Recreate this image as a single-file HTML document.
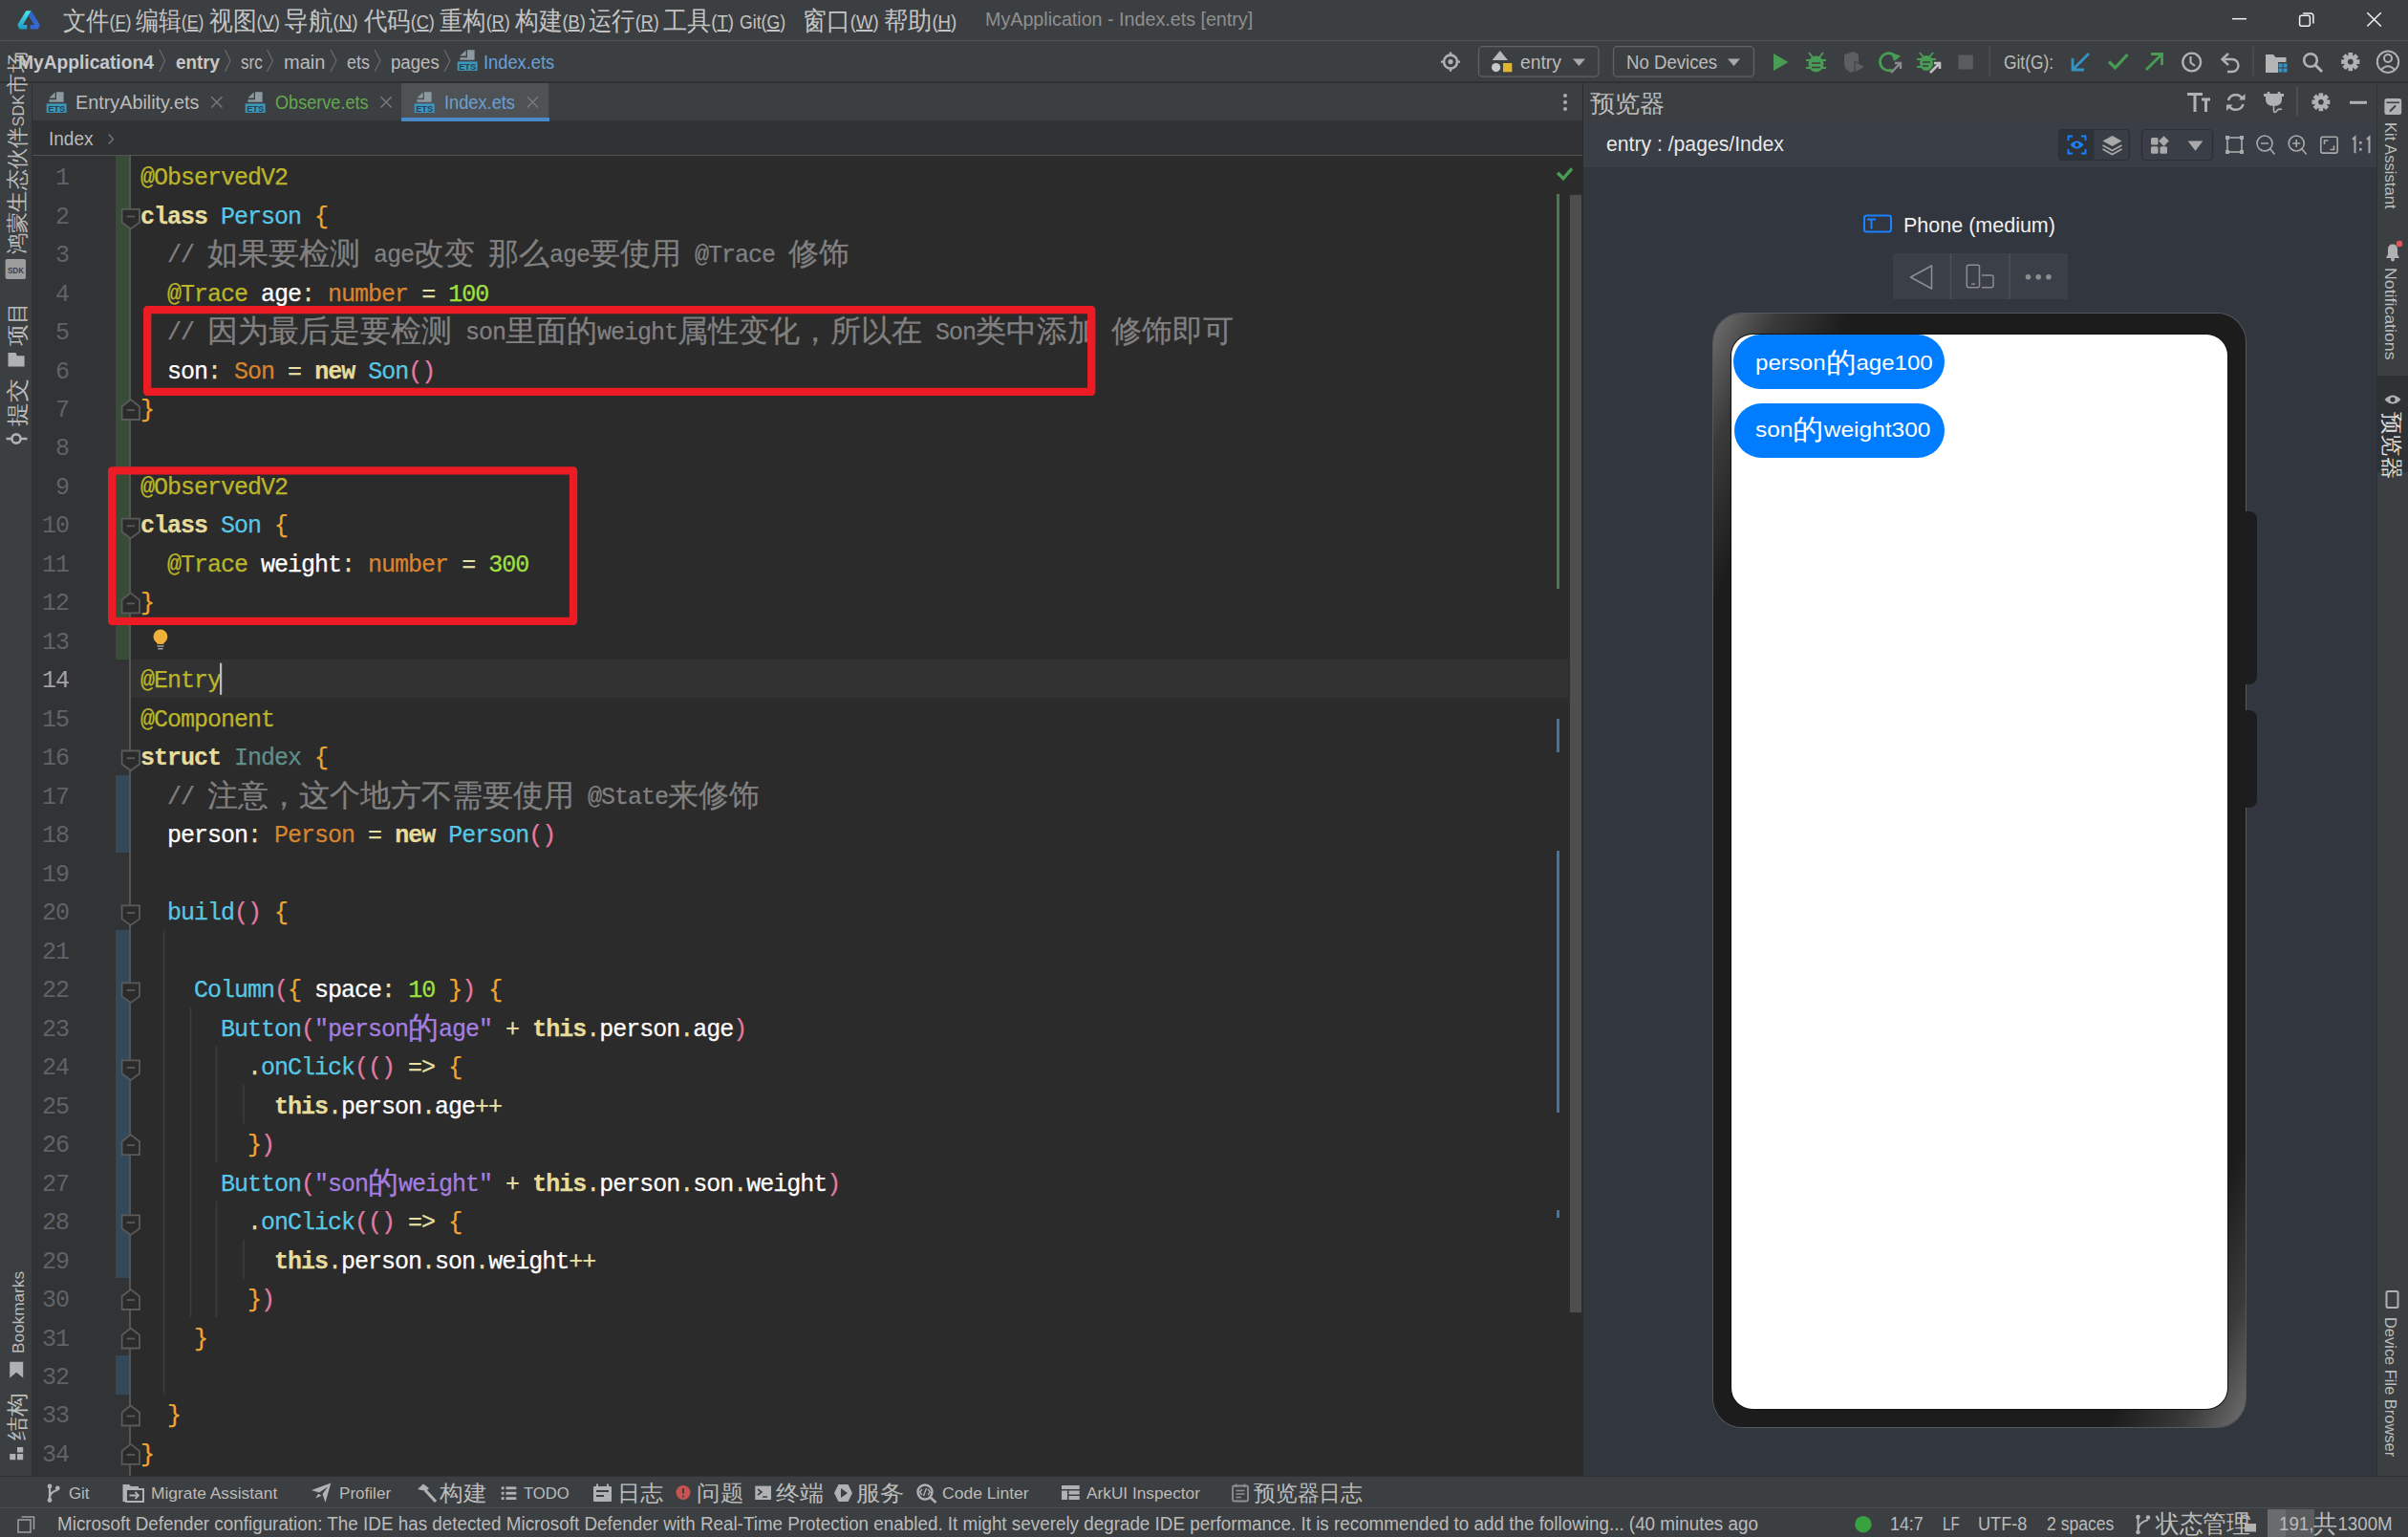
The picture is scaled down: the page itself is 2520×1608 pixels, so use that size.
<!DOCTYPE html>
<html><head><meta charset="utf-8"><title>DevEco</title><style>
*{margin:0;padding:0;box-sizing:border-box}
html,body{width:2520px;height:1608px;overflow:hidden;background:#3c3f41}
body{position:relative;font-family:"Liberation Sans",sans-serif;color:#bbbbbb}
.a{position:absolute}
.t{position:absolute;white-space:nowrap;line-height:1}
.cj{font-size:1.333em;line-height:0;position:relative;top:0.06em}
svg{position:absolute;overflow:visible}
/* code */
.code{position:absolute;left:0;top:0;width:2520px;height:1608px;pointer-events:none}
.ln{-webkit-text-stroke:0.25px currentColor;position:absolute;left:147px;height:40.48px;line-height:40.48px;font-family:"Liberation Mono",monospace;font-size:25px;letter-spacing:-1px;white-space:pre;color:#a9b7c6}
.num{position:absolute;left:34px;width:38px;text-align:right;height:40.48px;line-height:40.48px;font-family:"Liberation Mono",monospace;font-size:25px;letter-spacing:-1px;color:#606366}
.k{letter-spacing:0;font-family:"Liberation Sans";font-size:32px;line-height:0;position:relative;top:2px}
.an{color:#bbb529}
.kw{color:#e6dd9c;font-weight:bold}
.cl{color:#56c8e6}
.br{color:#f0a732}
.pa{color:#e27ba5}
.cm{color:#808080}
.id{color:#ffffff}
.ty{color:#d9842e}
.nu{color:#a0e040}
.op{color:#e8e0a4}
.st{color:#a57fe0}
.ix{color:#5f8f8a}
</style></head><body>
<div class="a" style="left:0.0px;top:0.0px;width:2520.0px;height:42.0px;background:#3c3f41;"></div>
<div class="a" style="left:0.0px;top:42.0px;width:2520.0px;height:1.0px;background:#4e5153;"></div>
<div class="a" style="left:0.0px;top:43.0px;width:2520.0px;height:42.0px;background:#3c3f41;"></div>
<div class="a" style="left:0.0px;top:85.0px;width:2520.0px;height:2.0px;background:#2e3032;"></div>
<div class="a" style="left:0.0px;top:87.0px;width:33.0px;height:1457.0px;background:#3c3f41;"></div>
<div class="a" style="left:33.0px;top:87.0px;width:1.0px;height:1457.0px;background:#2f3133;"></div>
<div class="a" style="left:34.0px;top:87.0px;width:1622.0px;height:39.0px;background:#3c3f41;"></div>
<div class="a" style="left:34.0px;top:126.0px;width:1622.0px;height:36.0px;background:#313233;"></div>
<div class="a" style="left:34.0px;top:162.0px;width:1622.0px;height:1.0px;background:#525354;"></div>
<div class="a" style="left:34.0px;top:163.0px;width:101.0px;height:1381.0px;background:#313335;"></div>
<div class="a" style="left:135.0px;top:163.0px;width:2.0px;height:1381.0px;background:#555555;"></div>
<div class="a" style="left:137.0px;top:163.0px;width:1519.0px;height:1381.0px;background:#2b2b2b;"></div>
<div class="a" style="left:137.0px;top:689.7px;width:1519.0px;height:40.5px;background:#323232;"></div>
<div class="a" style="left:121.0px;top:163.0px;width:14.0px;height:526.7px;background:#384c38;"></div>
<div class="a" style="left:121.0px;top:811.2px;width:14.0px;height:81.0px;background:#33495a;"></div>
<div class="a" style="left:121.0px;top:973.1px;width:14.0px;height:364.3px;background:#33495a;"></div>
<div class="a" style="left:121.0px;top:1418.4px;width:14.0px;height:40.5px;background:#33495a;"></div>
<div class="a" style="left:1656.0px;top:87.0px;width:1.0px;height:1457.0px;background:#2b2b2b;"></div>
<div class="a" style="left:1641.0px;top:202.0px;width:15.0px;height:1172.0px;background:#2e2e2e;"></div>
<div class="a" style="left:1643.0px;top:204.0px;width:12.0px;height:1168.6px;background:#4e4e4e;"></div>
<div class="a" style="left:1629.0px;top:203.0px;width:3.0px;height:412.5px;background:#4b7a52;"></div>
<div class="a" style="left:1629.0px;top:752.0px;width:3.0px;height:35.0px;background:#4473a0;"></div>
<div class="a" style="left:1629.0px;top:890.0px;width:3.0px;height:274.4px;background:#4473a0;"></div>
<div class="a" style="left:1629.0px;top:1266.0px;width:3.0px;height:8.0px;background:#4473a0;"></div>
<div class="a" style="left:1657.0px;top:87.0px;width:830.0px;height:40.0px;background:#3c3f41;"></div>
<div class="a" style="left:1657.0px;top:127.0px;width:830.0px;height:48.0px;background:#3a3e46;"></div>
<div class="a" style="left:1657.0px;top:175.0px;width:830.0px;height:1369.0px;background:#32363e;"></div>
<div class="a" style="left:2487.0px;top:87.0px;width:33.0px;height:1457.0px;background:#3c3f41;"></div>
<div class="a" style="left:2487.0px;top:87.0px;width:1.0px;height:1457.0px;background:#2f3133;"></div>
<div class="a" style="left:0.0px;top:1544.0px;width:2520.0px;height:34.0px;background:#3c3f41;"></div>
<div class="a" style="left:0.0px;top:1544.0px;width:2520.0px;height:1.0px;background:#323232;"></div>
<div class="a" style="left:0.0px;top:1577.0px;width:2520.0px;height:1.0px;background:#4a4d4f;"></div>
<div class="a" style="left:0.0px;top:1578.0px;width:2520.0px;height:30.0px;background:#3c3f41;"></div>
<div class="ln" style="top:167.10px"><span class="an">@ObservedV2</span></div>
<div class="num" style="top:167.10px;color:#606366">1</div>
<div class="ln" style="top:207.58px"><span class="kw">class</span> <span class="cl">Person</span> <span class="br">{</span></div>
<div class="num" style="top:207.58px;color:#606366">2</div>
<div class="ln" style="top:248.06px"><span class="cm">  // <span class="k">如果要检测</span> age<span class="k">改变</span> <span class="k">那么</span>age<span class="k">要使用</span> @Trace <span class="k">修饰</span></span></div>
<div class="num" style="top:248.06px;color:#606366">3</div>
<div class="ln" style="top:288.54px">  <span class="an">@Trace</span> <span class="id">age</span><span class="op">:</span> <span class="ty">number</span> <span class="op">=</span> <span class="nu">100</span></div>
<div class="num" style="top:288.54px;color:#606366">4</div>
<div class="ln" style="top:329.02px"><span class="cm">  // <span class="k">因为最后是要检测</span> son<span class="k">里面的</span>weight<span class="k">属性变化，所以在</span> Son<span class="k">类中添加</span> <span class="k">修饰即可</span></span></div>
<div class="num" style="top:329.02px;color:#606366">5</div>
<div class="ln" style="top:369.50px">  <span class="id">son</span><span class="op">:</span> <span class="ty">Son</span> <span class="op">=</span> <span class="kw">new</span> <span class="cl">Son</span><span class="pa">()</span></div>
<div class="num" style="top:369.50px;color:#606366">6</div>
<div class="ln" style="top:409.98px"><span class="br">}</span></div>
<div class="num" style="top:409.98px;color:#606366">7</div>
<div class="ln" style="top:450.46px"></div>
<div class="num" style="top:450.46px;color:#606366">8</div>
<div class="ln" style="top:490.94px"><span class="an">@ObservedV2</span></div>
<div class="num" style="top:490.94px;color:#606366">9</div>
<div class="ln" style="top:531.42px"><span class="kw">class</span> <span class="cl">Son</span> <span class="br">{</span></div>
<div class="num" style="top:531.42px;color:#606366">10</div>
<div class="ln" style="top:571.90px">  <span class="an">@Trace</span> <span class="id">weight</span><span class="op">:</span> <span class="ty">number</span> <span class="op">=</span> <span class="nu">300</span></div>
<div class="num" style="top:571.90px;color:#606366">11</div>
<div class="ln" style="top:612.38px"><span class="br">}</span></div>
<div class="num" style="top:612.38px;color:#606366">12</div>
<div class="ln" style="top:652.86px"></div>
<div class="num" style="top:652.86px;color:#606366">13</div>
<div class="ln" style="top:693.34px"><span class="an">@Entry</span></div>
<div class="num" style="top:693.34px;color:#a4a3a3">14</div>
<div class="ln" style="top:733.82px"><span class="an">@Component</span></div>
<div class="num" style="top:733.82px;color:#606366">15</div>
<div class="ln" style="top:774.30px"><span class="kw">struct</span> <span class="ix">Index</span> <span class="br">{</span></div>
<div class="num" style="top:774.30px;color:#606366">16</div>
<div class="ln" style="top:814.78px"><span class="cm">  // <span class="k">注意，这个地方不需要使用</span> @State<span class="k">来修饰</span></span></div>
<div class="num" style="top:814.78px;color:#606366">17</div>
<div class="ln" style="top:855.26px">  <span class="id">person</span><span class="op">:</span> <span class="ty">Person</span> <span class="op">=</span> <span class="kw">new</span> <span class="cl">Person</span><span class="pa">()</span></div>
<div class="num" style="top:855.26px;color:#606366">18</div>
<div class="ln" style="top:895.74px"></div>
<div class="num" style="top:895.74px;color:#606366">19</div>
<div class="ln" style="top:936.22px">  <span class="cl">build</span><span class="pa">()</span> <span class="br">{</span></div>
<div class="num" style="top:936.22px;color:#606366">20</div>
<div class="ln" style="top:976.70px"></div>
<div class="num" style="top:976.70px;color:#606366">21</div>
<div class="ln" style="top:1017.18px">    <span class="cl">Column</span><span class="pa">(</span><span class="br">{</span> <span class="id">space</span><span class="op">:</span> <span class="nu">10</span> <span class="br">}</span><span class="pa">)</span> <span class="br">{</span></div>
<div class="num" style="top:1017.18px;color:#606366">22</div>
<div class="ln" style="top:1057.66px">      <span class="cl">Button</span><span class="pa">(</span><span class="st">&quot;person<span class="k">的</span>age&quot;</span> <span class="op">+</span> <span class="kw">this</span><span class="op">.</span><span class="id">person</span><span class="op">.</span><span class="id">age</span><span class="pa">)</span></div>
<div class="num" style="top:1057.66px;color:#606366">23</div>
<div class="ln" style="top:1098.14px">        <span class="op">.</span><span class="cl">onClick</span><span class="pa">(()</span> <span class="op">=&gt;</span> <span class="br">{</span></div>
<div class="num" style="top:1098.14px;color:#606366">24</div>
<div class="ln" style="top:1138.62px">          <span class="kw">this</span><span class="op">.</span><span class="id">person</span><span class="op">.</span><span class="id">age</span><span class="op">++</span></div>
<div class="num" style="top:1138.62px;color:#606366">25</div>
<div class="ln" style="top:1179.10px">        <span class="br">}</span><span class="pa">)</span></div>
<div class="num" style="top:1179.10px;color:#606366">26</div>
<div class="ln" style="top:1219.58px">      <span class="cl">Button</span><span class="pa">(</span><span class="st">&quot;son<span class="k">的</span>weight&quot;</span> <span class="op">+</span> <span class="kw">this</span><span class="op">.</span><span class="id">person</span><span class="op">.</span><span class="id">son</span><span class="op">.</span><span class="id">weight</span><span class="pa">)</span></div>
<div class="num" style="top:1219.58px;color:#606366">27</div>
<div class="ln" style="top:1260.06px">        <span class="op">.</span><span class="cl">onClick</span><span class="pa">(()</span> <span class="op">=&gt;</span> <span class="br">{</span></div>
<div class="num" style="top:1260.06px;color:#606366">28</div>
<div class="ln" style="top:1300.54px">          <span class="kw">this</span><span class="op">.</span><span class="id">person</span><span class="op">.</span><span class="id">son</span><span class="op">.</span><span class="id">weight</span><span class="op">++</span></div>
<div class="num" style="top:1300.54px;color:#606366">29</div>
<div class="ln" style="top:1341.02px">        <span class="br">}</span><span class="pa">)</span></div>
<div class="num" style="top:1341.02px;color:#606366">30</div>
<div class="ln" style="top:1381.50px">    <span class="br">}</span></div>
<div class="num" style="top:1381.50px;color:#606366">31</div>
<div class="ln" style="top:1421.98px"></div>
<div class="num" style="top:1421.98px;color:#606366">32</div>
<div class="ln" style="top:1462.46px">  <span class="br">}</span></div>
<div class="num" style="top:1462.46px;color:#606366">33</div>
<div class="ln" style="top:1502.94px"><span class="br">}</span></div>
<div class="num" style="top:1502.94px;color:#606366">34</div>
<div class="a" style="left:1792.5px;top:328.3px;width:557.5px;height:1164.6px;border-radius:30px;background:linear-gradient(to bottom right,#707070 0%,#3a3a3a 6%,#1c1c1c 13%,#1c1c1c 87%,#3a3a3a 94%,#707070 100%);box-shadow:0 0 0 1px #55585c"></div>
<div class="a" style="left:2350px;top:534.7px;width:12px;height:181.7px;border-radius:0 8px 8px 0;background:#1d1d1f"></div>
<div class="a" style="left:2350px;top:743px;width:12px;height:102.4px;border-radius:0 8px 8px 0;background:#1d1d1f"></div>
<div class="a" style="left:1812.4px;top:349.6px;width:518.6px;height:1124px;border-radius:22px;background:#ffffff;box-shadow:0 0 0 1px #111"></div>
<div class="a" style="left:1813.6px;top:350px;width:221.9px;height:57.3px;border-radius:29px;background:#007dff"></div>
<div class="a" style="left:1814.7px;top:421.9px;width:220px;height:57.4px;border-radius:29px;background:#007dff"></div>
<svg style="left:0;top:0" width="2520" height="1608" viewBox="0 0 2520 1608">
<defs><linearGradient id="lg1" x1="0" y1="0" x2="0" y2="1"><stop offset="0" stop-color="#4fe3ea"/><stop offset="1" stop-color="#1b9ccf"/></linearGradient><linearGradient id="lg2" x1="0" y1="0" x2="1" y2="1"><stop offset="0" stop-color="#2466c8"/><stop offset="1" stop-color="#3f66d6"/></linearGradient></defs>
<path d="M27.3 11.3 H32.75 L24 25.9 H28.3 V30.4 H20.4 L18.3 26 Z" fill="url(#lg1)"/>
<path d="M32.75 11.3 L41.8 25.9 L39.7 30.4 H31.7 V25.9 H36 L30 16.9 Z" fill="url(#lg2)"/>
<path d="M2336 19.7 H2351" stroke="#f2f2f2" stroke-width="1.5"/>
<rect x="2406.6" y="16.3" width="10.8" height="11" rx="2" fill="none" stroke="#f2f2f2" stroke-width="1.5"/>
<path d="M2410.2 13.9 H2418.3 a2.6 2.6 0 0 1 2.6 2.6 V24.5" fill="none" stroke="#f2f2f2" stroke-width="1.5"/>
<path d="M2477.3 13.2 L2491.8 27.5 M2491.8 13.2 L2477.3 27.5" stroke="#f2f2f2" stroke-width="1.5"/>
<polyline points="167.0,52.0 172.5,63.5 167.0,75.0" stroke="#6b6b6b" stroke-width="1.2" fill="none"/>
<polyline points="235.5,52.0 241.0,63.5 235.5,75.0" stroke="#6b6b6b" stroke-width="1.2" fill="none"/>
<polyline points="279.5,52.0 285.5,63.5 279.5,75.0" stroke="#6b6b6b" stroke-width="1.2" fill="none"/>
<polyline points="346.0,52.0 352.0,63.5 346.0,75.0" stroke="#6b6b6b" stroke-width="1.2" fill="none"/>
<polyline points="392.0,52.0 398.0,63.5 392.0,75.0" stroke="#6b6b6b" stroke-width="1.2" fill="none"/>
<polyline points="465.0,52.0 471.0,63.5 465.0,75.0" stroke="#6b6b6b" stroke-width="1.2" fill="none"/>
<path d="M481.4 58.5 L487.7 52.6 V58.5 Z" fill="#8d99a1"/><path d="M489.0 52.3 H496.6 V62.8 H481.4 V60.2 H489.0 Z" fill="#8d99a1"/><rect x="478.7" y="64.4" width="20.9" height="9.5" fill="#3d97bf"/><text x="480.2" y="73.0" font-family="Liberation Sans" font-size="9.6" font-weight="bold" fill="#27414f" textLength="18" lengthAdjust="spacingAndGlyphs">ETS</text>
<circle cx="1518" cy="64.6" r="7" fill="none" stroke="#afb1b3" stroke-width="2.6"/><circle cx="1518" cy="64.6" r="2.6" fill="#afb1b3"/>
<path d="M1518 54.5 V57.8 M1518 71.4 V74.7 M1507.9 64.6 H1511.2 M1524.8 64.6 H1528.1" stroke="#afb1b3" stroke-width="2.4"/>
<rect x="1547.5" y="48.7" width="125.5" height="31.5" rx="4" fill="none" stroke="#5f6264" stroke-width="1.3"/>
<path d="M1569.8 53 L1578 63 H1561.6 Z" fill="#b8b8b8"/><circle cx="1565.6" cy="70.6" r="4.6" fill="#c8c8c8"/><rect x="1573" y="66" width="9.3" height="9.3" fill="#e3b52e"/>
<path d="M1646 61.5 H1659 L1652.5 69 Z" fill="#a9a9a9"/>
<rect x="1688.5" y="48.7" width="147" height="31.5" rx="4" fill="none" stroke="#5f6264" stroke-width="1.3"/>
<path d="M1808 61.5 H1821 L1814.5 69 Z" fill="#a9a9a9"/>
<path d="M1856 56 L1871.5 65 L1856 74 Z" fill="#499c54"/>
<g fill="#499c54"><ellipse cx="1900.5" cy="67" rx="8" ry="8.5"/><path d="M1893 55 l4 5 M1908 55 l-4 5" stroke="#499c54" stroke-width="2"/><path d="M1890 63 h21 M1890 71 h21" stroke="#499c54" stroke-width="2"/></g><path d="M1896 66 h9 M1896 70.5 h9" stroke="#3c3f41" stroke-width="1.6"/>
<path d="M1930 57 L1940 54 L1945 57 V66 Q1945 73 1937 76 Q1930 73 1930 66 Z" fill="#5c5e60"/><path d="M1941 64 L1952 70 L1941 76 Z" fill="#5c5e60" stroke="#3c3f41" stroke-width="1"/>
<path d="M1985 62 A9 9 0 1 0 1980 73" fill="none" stroke="#499c54" stroke-width="2.8"/><path d="M1979 55 L1989 58.5 L1982 64 Z" fill="#499c54"/>
<path d="M1979 76 L1989 66 M1983 66 H1989 V72" fill="none" stroke="#8c8c8c" stroke-width="2.4"/>
<g><ellipse cx="2016" cy="66" rx="7" ry="8" fill="#499c54"/><path d="M2009 55 l3.5 4.5 M2023 55 l-3.5 4.5 M2006 62 h20 M2006 70 h14" stroke="#499c54" stroke-width="2"/><path d="M2012 65 h8 M2012 69 h6" stroke="#3c3f41" stroke-width="1.5"/><path d="M2020 76 L2030 66 M2024 66 H2030 V72" fill="none" stroke="#c0c0c0" stroke-width="2.6"/></g>
<rect x="2049.5" y="57.5" width="15.3" height="15" fill="#5a5c5e"/>
<path d="M2082 49 V79 M2358 49 V79" stroke="#505355" stroke-width="1.3"/>
<path d="M2186 56 L2170 72 M2169 61 V73 H2181" fill="none" stroke="#3592c4" stroke-width="2.8"/>
<path d="M2207 64.5 L2213.5 71 L2226.5 57" fill="none" stroke="#499c54" stroke-width="3.2"/>
<path d="M2246 73 L2262 57 M2251 56.5 H2262.5 V68" fill="none" stroke="#499c54" stroke-width="2.8"/>
<circle cx="2293.7" cy="65" r="9.4" fill="none" stroke="#afb1b3" stroke-width="2.4"/><path d="M2292.5 59 V65.5 L2297 69" fill="none" stroke="#afb1b3" stroke-width="2.2"/>
<path d="M2327 62 H2336 A6.5 6.5 0 0 1 2336 75 H2331" fill="none" stroke="#afb1b3" stroke-width="2.4"/><path d="M2332 56 L2325.5 62 L2332 68" fill="none" stroke="#afb1b3" stroke-width="2.4"/>
<path d="M2371 57 H2379 L2381.5 60 H2392.5 V76 H2371 Z" fill="#b5b5b5"/><rect x="2384" y="65" width="10" height="12" fill="#3c3f41"/><rect x="2384.5" y="66.5" width="4" height="4" fill="#3592c4"/><rect x="2389.5" y="66.5" width="4" height="4" fill="#3592c4"/><rect x="2384.5" y="71.5" width="4" height="4" fill="#3592c4"/><rect x="2389.5" y="71.5" width="4" height="4" fill="#3592c4"/>
<circle cx="2418" cy="63" r="6.8" fill="none" stroke="#afb1b3" stroke-width="2.6"/><path d="M2423 68 L2430 75" stroke="#afb1b3" stroke-width="3"/>
<g transform="translate(2459.8 64.6)" fill="#afb1b3"><rect x="-2.3" y="-9.6" width="4.6" height="5.8" transform="rotate(0)"/><rect x="-2.3" y="-9.6" width="4.6" height="5.8" transform="rotate(45)"/><rect x="-2.3" y="-9.6" width="4.6" height="5.8" transform="rotate(90)"/><rect x="-2.3" y="-9.6" width="4.6" height="5.8" transform="rotate(135)"/><rect x="-2.3" y="-9.6" width="4.6" height="5.8" transform="rotate(180)"/><rect x="-2.3" y="-9.6" width="4.6" height="5.8" transform="rotate(225)"/><rect x="-2.3" y="-9.6" width="4.6" height="5.8" transform="rotate(270)"/><rect x="-2.3" y="-9.6" width="4.6" height="5.8" transform="rotate(315)"/><circle r="6.9"/><circle r="2.9" fill="#3c3f41"/></g>
<circle cx="2499" cy="64.7" r="11.2" fill="none" stroke="#afb1b3" stroke-width="2"/><circle cx="2499" cy="61" r="4" fill="none" stroke="#afb1b3" stroke-width="2"/><path d="M2491.5 73.5 Q2499 65 2506.5 73.5" fill="none" stroke="#afb1b3" stroke-width="2"/>
<rect x="420.0" y="87.0" width="154.0" height="36.0" fill="#4e5254"/>
<rect x="420.0" y="123.0" width="155.0" height="4.0" fill="#4a88c7"/>
<path d="M51.4 102.5 L57.7 96.6 V102.5 Z" fill="#8d99a1"/><path d="M59.0 96.3 H66.6 V106.8 H51.4 V104.2 H59.0 Z" fill="#8d99a1"/><rect x="48.7" y="108.4" width="20.9" height="9.5" fill="#3d97bf"/><text x="50.2" y="117.0" font-family="Liberation Sans" font-size="9.6" font-weight="bold" fill="#27414f" textLength="18" lengthAdjust="spacingAndGlyphs">ETS</text>
<path d="M259.4 102.5 L265.7 96.6 V102.5 Z" fill="#8d99a1"/><path d="M267.0 96.3 H274.6 V106.8 H259.4 V104.2 H267.0 Z" fill="#8d99a1"/><rect x="256.7" y="108.4" width="20.9" height="9.5" fill="#3d97bf"/><text x="258.2" y="117.0" font-family="Liberation Sans" font-size="9.6" font-weight="bold" fill="#27414f" textLength="18" lengthAdjust="spacingAndGlyphs">ETS</text>
<path d="M436.4 102.5 L442.7 96.6 V102.5 Z" fill="#8d99a1"/><path d="M444.0 96.3 H451.6 V106.8 H436.4 V104.2 H444.0 Z" fill="#8d99a1"/><rect x="433.7" y="108.4" width="20.9" height="9.5" fill="#3d97bf"/><text x="435.2" y="117.0" font-family="Liberation Sans" font-size="9.6" font-weight="bold" fill="#27414f" textLength="18" lengthAdjust="spacingAndGlyphs">ETS</text>
<path d="M221.2 101.2 L232.4 112.4 M232.4 101.2 L221.2 112.4" stroke="#7b7b7b" stroke-width="1.4" fill="none"/>
<path d="M398.5 101.2 L409.7 112.4 M409.7 101.2 L398.5 112.4" stroke="#7b7b7b" stroke-width="1.4" fill="none"/>
<path d="M551.8 101.2 L563.0 112.4 M563.0 101.2 L551.8 112.4" stroke="#7b7b7b" stroke-width="1.4" fill="none"/>
<circle cx="1638" cy="100" r="2.1" fill="#a9a9a9"/><circle cx="1638" cy="107" r="2.1" fill="#a9a9a9"/><circle cx="1638" cy="114" r="2.1" fill="#a9a9a9"/>
<polyline points="113.8,140.5 118.5,145.5 113.8,150.5" stroke="#7a7a7a" stroke-width="1.3" fill="none"/>
<path d="M1630 180.8 L1636 186.8 L1645 176.3" fill="none" stroke="#499c54" stroke-width="3.4"/>
<rect x="170.7" y="973.1" width="1.6" height="485.8" fill="#3c3c3c"/>
<rect x="198.7" y="1054.1" width="1.6" height="323.8" fill="#3c3c3c"/>
<rect x="225.7" y="1094.5" width="1.6" height="121.4" fill="#3c3c3c"/>
<rect x="225.7" y="1256.5" width="1.6" height="121.4" fill="#3c3c3c"/>
<rect x="254.2" y="1135.0" width="1.6" height="40.5" fill="#3c3c3c"/>
<rect x="254.2" y="1296.9" width="1.6" height="40.5" fill="#3c3c3c"/>
<path d="M127.6 218.8 H146.0 V232.8 L136.8 239.4 L127.6 232.8 Z" fill="#2b2b2b" stroke="#5a5a5a" stroke-width="1.8"/><path d="M132.6 226.5 H141.0" stroke="#5a5a5a" stroke-width="1.8"/>
<path d="M127.6 542.6 H146.0 V556.6 L136.8 563.2 L127.6 556.6 Z" fill="#2b2b2b" stroke="#5a5a5a" stroke-width="1.8"/><path d="M132.6 550.3 H141.0" stroke="#5a5a5a" stroke-width="1.8"/>
<path d="M127.6 785.5 H146.0 V799.5 L136.8 806.1 L127.6 799.5 Z" fill="#2b2b2b" stroke="#5a5a5a" stroke-width="1.8"/><path d="M132.6 793.2 H141.0" stroke="#5a5a5a" stroke-width="1.8"/>
<path d="M127.6 947.4 H146.0 V961.4 L136.8 968.0 L127.6 961.4 Z" fill="#2b2b2b" stroke="#5a5a5a" stroke-width="1.8"/><path d="M132.6 955.1 H141.0" stroke="#5a5a5a" stroke-width="1.8"/>
<path d="M127.6 1028.4 H146.0 V1042.4 L136.8 1049.0 L127.6 1042.4 Z" fill="#2b2b2b" stroke="#5a5a5a" stroke-width="1.8"/><path d="M132.6 1036.1 H141.0" stroke="#5a5a5a" stroke-width="1.8"/>
<path d="M127.6 1109.3 H146.0 V1123.3 L136.8 1129.9 L127.6 1123.3 Z" fill="#2b2b2b" stroke="#5a5a5a" stroke-width="1.8"/><path d="M132.6 1117.0 H141.0" stroke="#5a5a5a" stroke-width="1.8"/>
<path d="M127.6 1271.3 H146.0 V1285.3 L136.8 1291.9 L127.6 1285.3 Z" fill="#2b2b2b" stroke="#5a5a5a" stroke-width="1.8"/><path d="M132.6 1279.0 H141.0" stroke="#5a5a5a" stroke-width="1.8"/>
<path d="M136.8 418.0 L146.0 425.2 V439.0 H127.6 V425.2 Z" fill="#2b2b2b" stroke="#5a5a5a" stroke-width="1.8"/><path d="M132.6 429.0 H141.0" stroke="#5a5a5a" stroke-width="1.8"/>
<path d="M136.8 620.4 L146.0 627.6 V641.4 H127.6 V627.6 Z" fill="#2b2b2b" stroke="#5a5a5a" stroke-width="1.8"/><path d="M132.6 631.4 H141.0" stroke="#5a5a5a" stroke-width="1.8"/>
<path d="M136.8 1187.1 L146.0 1194.3 V1208.1 H127.6 V1194.3 Z" fill="#2b2b2b" stroke="#5a5a5a" stroke-width="1.8"/><path d="M132.6 1198.1 H141.0" stroke="#5a5a5a" stroke-width="1.8"/>
<path d="M136.8 1349.0 L146.0 1356.2 V1370.0 H127.6 V1356.2 Z" fill="#2b2b2b" stroke="#5a5a5a" stroke-width="1.8"/><path d="M132.6 1360.0 H141.0" stroke="#5a5a5a" stroke-width="1.8"/>
<path d="M136.8 1389.5 L146.0 1396.7 V1410.5 H127.6 V1396.7 Z" fill="#2b2b2b" stroke="#5a5a5a" stroke-width="1.8"/><path d="M132.6 1400.5 H141.0" stroke="#5a5a5a" stroke-width="1.8"/>
<path d="M136.8 1470.5 L146.0 1477.7 V1491.5 H127.6 V1477.7 Z" fill="#2b2b2b" stroke="#5a5a5a" stroke-width="1.8"/><path d="M132.6 1481.5 H141.0" stroke="#5a5a5a" stroke-width="1.8"/>
<path d="M136.8 1510.9 L146.0 1518.1 V1531.9 H127.6 V1518.1 Z" fill="#2b2b2b" stroke="#5a5a5a" stroke-width="1.8"/><path d="M132.6 1521.9 H141.0" stroke="#5a5a5a" stroke-width="1.8"/>
<circle cx="167.9" cy="666.0" r="7.4" fill="#f0b13a"/><path d="M164.3 669.8 h7.2 v4 h-7.2 z" fill="#f0b13a"/><path d="M164.4 675.9 h7 M165.2 678.7 h5.4" stroke="#a0a0a0" stroke-width="1.5"/>
<rect x="230" y="693.7" width="2.2" height="33.2" fill="#bbbbbb"/>
<rect x="154.15" y="324.2" width="988.05" height="85.65" fill="none" stroke="#ed1c24" stroke-width="8.3" stroke-linejoin="round"/>
<rect x="117.15" y="492.4" width="482.9" height="157.5" fill="none" stroke="#ed1c24" stroke-width="8.3" stroke-linejoin="round"/>
<rect x="5.6" y="271" width="21.4" height="21" rx="2" fill="#9d9d9d"/><text x="8" y="285.5" font-family="Liberation Sans" font-weight="bold" font-size="8.5" fill="#3c3f41" textLength="17" lengthAdjust="spacingAndGlyphs">SDK</text>
<path d="M8.5 369 H16.5 L17.8 372.3 H25.6 V383.5 H8.5 Z" fill="#afb1b3"/>
<circle cx="17" cy="459" r="4.6" fill="none" stroke="#afb1b3" stroke-width="2.6"/><path d="M6.5 459 H12.4 M21.6 459 H28.5" stroke="#afb1b3" stroke-width="2.6"/>
<path d="M10.2 1424.8 H24.2 V1441.6 L17.2 1435.7 L10.2 1441.6 Z" fill="#afb1b3"/>
<path d="M10.2 1521 h6.1 v6.2 h-6.1 z M18 1521 h6.2 v6.2 h-6.2 z M18 1513.9 h6.2 v5.5 h-6.2 z" fill="#afb1b3"/>
<rect x="2488.0" y="393.0" width="32.0" height="101.0" fill="#2f3234"/>
<rect x="2495.4" y="103" width="17.8" height="17" rx="2.5" fill="#afb1b3"/><rect x="2497.5" y="106.5" width="13.6" height="1.6" fill="#3c3f41"/><path d="M2501 116.5 L2507 110.5" stroke="#3c3f41" stroke-width="2"/>
<path d="M2497 270 H2511 L2509 266 V261 Q2509 255.5 2504 255.5 Q2499 255.5 2499 261 V266 Z" fill="#afb1b3"/><circle cx="2504" cy="271.5" r="2" fill="#afb1b3"/><circle cx="2511" cy="255" r="3.2" fill="#e05555"/>
<path d="M2495.5 418 Q2504 409 2512.5 418 Q2504 427 2495.5 418 Z" fill="#afb1b3"/><circle cx="2504" cy="418" r="2.6" fill="#2f3234"/>
<rect x="2497.5" y="1351" width="12" height="17" rx="1.5" fill="none" stroke="#afb1b3" stroke-width="2"/>
<path d="M2289 98.5 H2305 M2297 98.5 V117 M2304 104 H2313 M2308.5 104 V117" stroke="#afb1b3" stroke-width="3" fill="none"/>
<path d="M2332 105 A8 8 0 0 1 2347 104 M2347.5 109 A8 8 0 0 1 2332.5 110" fill="none" stroke="#afb1b3" stroke-width="2.6"/><path d="M2343 104.5 H2349.5 V98 Z M2336.5 109.5 H2330 V116 Z" fill="#afb1b3"/>
<path d="M2369 98 H2390 V101 H2388 V104 Q2388 111 2379.5 111 Q2371 111 2371 104 V101 H2369 Z" fill="#afb1b3"/><path d="M2374 96 V99 M2385 96 V99" stroke="#afb1b3" stroke-width="2.6"/><path d="M2379.5 111 V116 Q2379.5 118 2382 117 Q2384 113 2388 114.5" fill="none" stroke="#afb1b3" stroke-width="1.6"/>
<path d="M2404 91 V121" stroke="#55585a" stroke-width="1.3"/>
<g transform="translate(2428.9 106.8)" fill="#afb1b3"><rect x="-2.3" y="-9.4" width="4.6" height="5.6" transform="rotate(0)"/><rect x="-2.3" y="-9.4" width="4.6" height="5.6" transform="rotate(45)"/><rect x="-2.3" y="-9.4" width="4.6" height="5.6" transform="rotate(90)"/><rect x="-2.3" y="-9.4" width="4.6" height="5.6" transform="rotate(135)"/><rect x="-2.3" y="-9.4" width="4.6" height="5.6" transform="rotate(180)"/><rect x="-2.3" y="-9.4" width="4.6" height="5.6" transform="rotate(225)"/><rect x="-2.3" y="-9.4" width="4.6" height="5.6" transform="rotate(270)"/><rect x="-2.3" y="-9.4" width="4.6" height="5.6" transform="rotate(315)"/><circle r="6.8"/><circle r="2.8" fill="#3c3f41"/></g>
<path d="M2459 107.3 H2477" stroke="#afb1b3" stroke-width="3"/>
<rect x="2154.5" y="135.5" width="74" height="32" rx="4" fill="#393d45" stroke="#2c2f35" stroke-width="1.2"/>
<path d="M2158.5 135.5 H2191.5 V167.5 H2158.5 A4 4 0 0 1 2154.5 163.5 V139.5 A4 4 0 0 1 2158.5 135.5 Z" fill="#2e3239"/>
<path d="M2164.5 147 V142.5 H2169 M2178 142.5 H2182.5 V147 M2182.5 156 V160.5 H2178 M2169 160.5 H2164.5 V156" fill="none" stroke="#1a82ff" stroke-width="1.8"/>
<path d="M2166.5 151.5 Q2173.5 143.5 2180.5 151.5 Q2173.5 159.5 2166.5 151.5 Z" fill="#1a82ff"/><circle cx="2173.5" cy="151.5" r="2.2" fill="#2e3239"/>
<path d="M2210.5 142 L2220.5 147.5 L2210.5 153 L2200.5 147.5 Z" fill="#a9a9a9"/><path d="M2200.5 152 L2210.5 157.5 L2220.5 152 M2200.5 156 L2210.5 161.5 L2220.5 156" fill="none" stroke="#a9a9a9" stroke-width="1.6"/>
<rect x="2241.5" y="135.5" width="74" height="32" rx="4" fill="none" stroke="#2c2f35" stroke-width="1.2"/>
<rect x="2251" y="144" width="7.5" height="7.5" rx="1.5" fill="#a9a9a9"/><rect x="2251" y="153.3" width="7.5" height="7.5" rx="1.5" fill="#a9a9a9"/><rect x="2260.5" y="153.3" width="7.5" height="7.5" rx="1.5" fill="#a9a9a9"/><path d="M2264.5 142.3 L2269.8 147.6 L2264.5 152.9 L2259.2 147.6 Z" fill="#a9a9a9"/>
<path d="M2289.6 147.6 H2305.4 L2297.5 157.7 Z" fill="#a9a9a9"/>
<rect x="2331" y="144" width="15" height="15" fill="none" stroke="#a9a9a9" stroke-width="1.6"/><g fill="#a9a9a9"><rect x="2329" y="142" width="4" height="4"/><rect x="2344" y="142" width="4" height="4"/><rect x="2329" y="157" width="4" height="4"/><rect x="2344" y="157" width="4" height="4"/></g>
<circle cx="2370" cy="150" r="8" fill="none" stroke="#a9a9a9" stroke-width="1.6"/><path d="M2366 150 H2374 M2375.5 155.5 L2380.5 161.5" stroke="#a9a9a9" stroke-width="1.6"/>
<circle cx="2403.2" cy="150" r="8" fill="none" stroke="#a9a9a9" stroke-width="1.6"/><path d="M2399.2 150 H2407.2 M2403.2 146 V154 M2408.7 155.5 L2413.7 161.5" stroke="#a9a9a9" stroke-width="1.6"/>
<rect x="2428.8" y="143.2" width="17.4" height="16.9" rx="2" fill="none" stroke="#a9a9a9" stroke-width="1.6"/><path d="M2432.5 151 V147 H2436.5 M2442.5 152.5 V156.5 H2438.5" fill="none" stroke="#a9a9a9" stroke-width="1.6"/>
<path d="M2462 146 L2464.5 143.5 V160.3 M2477 146 L2479.5 143.5 V160.3" fill="none" stroke="#a9a9a9" stroke-width="2"/><rect x="2469" y="148" width="2.6" height="2.6" fill="#a9a9a9"/><rect x="2469" y="155" width="2.6" height="2.6" fill="#a9a9a9"/>
<rect x="1951" y="225.5" width="28" height="17" rx="2.5" fill="none" stroke="#1a82ff" stroke-width="2"/><path d="M1954 229.5 H1963 M1958.5 229.5 V239.5" stroke="#1a82ff" stroke-width="2"/>
<rect x="1981" y="265" width="183" height="48" fill="#3b3f47"/><path d="M2041.5 265 V313 M2103 265 V313" stroke="#4b4f57" stroke-width="1.5"/>
<path d="M2021.5 278 V302 L1999.5 290 Z" fill="none" stroke="#8d8d8d" stroke-width="1.6" stroke-linejoin="round"/>
<rect x="2058.3" y="277.3" width="13.2" height="23.5" rx="2" fill="none" stroke="#8d8d8d" stroke-width="1.5"/><path d="M2063 297.2 H2067" stroke="#8d8d8d" stroke-width="1.5"/><path d="M2074 288 H2084 a2 2 0 0 1 2 2 V298.8 a2 2 0 0 1 -2 2 H2074" fill="none" stroke="#8d8d8d" stroke-width="1.5"/>
<circle cx="2122.5" cy="289.8" r="2.8" fill="#8d8d8d"/><circle cx="2133.2" cy="289.8" r="2.8" fill="#8d8d8d"/><circle cx="2143.9" cy="289.8" r="2.8" fill="#8d8d8d"/>
<g fill="none" stroke="#afb1b3" stroke-width="2.2"><path d="M52 1556 V1569"/><path d="M52 1567 Q52 1561 60 1559"/></g><circle cx="52" cy="1555" r="2.4" fill="#afb1b3"/><circle cx="52" cy="1569.5" r="2.4" fill="#afb1b3"/><circle cx="60.3" cy="1557" r="2.4" fill="#afb1b3"/>
<path d="M128.5 1553 H135 L137 1555 H145 V1558 H132 V1571 H128.5 Z" fill="#afb1b3"/><rect x="132" y="1558" width="18" height="13" fill="none" stroke="#afb1b3" stroke-width="2"/><path d="M135.5 1564.5 H145 M141.5 1561 L145 1564.5 L141.5 1568" fill="none" stroke="#afb1b3" stroke-width="1.8"/>
<path d="M326 1559 L346.3 1551.6 L340.5 1572 L337.5 1563 L343 1555.5 L334 1561.5 Z" fill="#afb1b3"/><path d="M330.3 1567.6 L333 1562.8 L336.5 1564.8 Z" fill="#afb1b3"/>
<path d="M437 1558 L443 1552.5 L449 1557 L446 1560 Z" fill="#afb1b3"/><path d="M445 1559 L456 1571" stroke="#afb1b3" stroke-width="3.2"/>
<g fill="#afb1b3"><rect x="524.7" y="1555.4" width="2.8" height="2.8"/><rect x="524.7" y="1560.8" width="2.8" height="2.8"/><rect x="524.7" y="1566.2" width="2.8" height="2.8"/><rect x="529.5" y="1555.4" width="10.8" height="2.8"/><rect x="529.5" y="1560.8" width="10.8" height="2.8"/><rect x="529.5" y="1566.2" width="10.8" height="2.8"/></g>
<rect x="621" y="1555" width="19" height="16" rx="1" fill="#afb1b3"/><path d="M625 1552.5 V1556 M636 1552.5 V1556" stroke="#afb1b3" stroke-width="2"/><path d="M624 1560 H637 M624 1565 H632" stroke="#3c3f41" stroke-width="2"/>
<circle cx="715" cy="1561.5" r="7.5" fill="#c75450"/><path d="M715 1557 V1562.5" stroke="#3c3f41" stroke-width="2"/><circle cx="715" cy="1565.5" r="1.1" fill="#3c3f41"/>
<rect x="790.3" y="1554.6" width="16.7" height="14.4" fill="#afb1b3"/><path d="M793 1558 L797 1561 L793 1564 M798 1566 H803" fill="none" stroke="#3c3f41" stroke-width="1.6"/>
<path d="M877.5 1553 H887.5 L892 1562 L887.5 1571 H877.5 L873 1562 Z" fill="#afb1b3"/><path d="M880 1557 L887 1562 L880 1567 Z" fill="#3c3f41"/>
<circle cx="968" cy="1561" r="7.5" fill="none" stroke="#afb1b3" stroke-width="2.4"/><path d="M973.5 1566.5 L979.5 1572" stroke="#afb1b3" stroke-width="2.6"/><path d="M965 1558 L962.5 1561 L965 1564 M971 1558 L973.5 1561 L971 1564 M969.5 1557 L966.5 1565" fill="none" stroke="#afb1b3" stroke-width="1.4"/>
<g fill="#afb1b3"><rect x="1111" y="1554" width="18.7" height="4"/><rect x="1111" y="1559.5" width="6" height="9.5"/><rect x="1118.5" y="1559.5" width="11.2" height="4"/><rect x="1118.5" y="1565" width="11.2" height="4"/></g>
<rect x="1290" y="1554.5" width="16" height="16" rx="1.5" fill="none" stroke="#8f8f8f" stroke-width="1.8"/><path d="M1293.5 1552.5 V1556 M1302.5 1552.5 V1556 M1293.5 1559.5 H1302.5 M1293.5 1563 H1302.5 M1293.5 1566.5 H1299" stroke="#8f8f8f" stroke-width="1.6"/>
<rect x="19" y="1590" width="13" height="13" fill="none" stroke="#a0a0a0" stroke-width="1.5"/><path d="M22.5 1587 H35.5 V1600" fill="none" stroke="#a0a0a0" stroke-width="1.5"/>
<circle cx="1949.9" cy="1594.7" r="8.7" fill="#37a23f"/>
<g fill="none" stroke="#afb1b3" stroke-width="2"><path d="M2237.5 1587 V1603"/><path d="M2237.5 1600 Q2238 1593 2248 1590"/></g><circle cx="2237.5" cy="1587" r="2.3" fill="#afb1b3"/><circle cx="2237.5" cy="1603" r="2.3" fill="#afb1b3"/><circle cx="2248" cy="1587.5" r="2.3" fill="#afb1b3"/>
<path d="M2345 1593 V1590 a4.5 4.5 0 0 1 9 0" fill="none" stroke="#afb1b3" stroke-width="2"/><rect x="2349" y="1594" width="12" height="8.5" fill="#afb1b3"/>
</svg>
<div class="t" style="left:65.60px;top:12.67px;font-size:20.00px;color:#c4c4c4;transform:scaleX(0.8994);transform-origin:0 0;"><span class="cj">文件</span>(<u style="text-underline-offset:1px">F</u>)</div>
<div class="t" style="left:141.64px;top:12.67px;font-size:20.00px;color:#c4c4c4;transform:scaleX(0.8855);transform-origin:0 0;"><span class="cj">编辑</span>(<u style="text-underline-offset:1px">E</u>)</div>
<div class="t" style="left:218.56px;top:12.67px;font-size:20.00px;color:#c4c4c4;transform:scaleX(0.9165);transform-origin:0 0;"><span class="cj">视图</span>(<u style="text-underline-offset:1px">V</u>)</div>
<div class="t" style="left:297.47px;top:12.67px;font-size:20.00px;color:#c4c4c4;transform:scaleX(0.9484);transform-origin:0 0;"><span class="cj">导航</span>(<u style="text-underline-offset:1px">N</u>)</div>
<div class="t" style="left:380.59px;top:12.67px;font-size:20.00px;color:#c4c4c4;transform:scaleX(0.9025);transform-origin:0 0;"><span class="cj">代码</span>(<u style="text-underline-offset:1px">C</u>)</div>
<div class="t" style="left:459.59px;top:12.67px;font-size:20.00px;color:#c4c4c4;transform:scaleX(0.9025);transform-origin:0 0;"><span class="cj">重构</span>(<u style="text-underline-offset:1px">R</u>)</div>
<div class="t" style="left:538.56px;top:12.67px;font-size:20.00px;color:#c4c4c4;transform:scaleX(0.9165);transform-origin:0 0;"><span class="cj">构建</span>(<u style="text-underline-offset:1px">B</u>)</div>
<div class="t" style="left:615.59px;top:12.67px;font-size:20.00px;color:#c4c4c4;transform:scaleX(0.9025);transform-origin:0 0;"><span class="cj">运行</span>(<u style="text-underline-offset:1px">R</u>)</div>
<div class="t" style="left:693.52px;top:12.67px;font-size:20.00px;color:#c4c4c4;transform:scaleX(0.9310);transform-origin:0 0;"><span class="cj">工具</span>(<u style="text-underline-offset:1px">T</u>)</div>
<div class="t" style="left:774.00px;top:12.67px;font-size:20.00px;color:#c4c4c4;transform:scaleX(0.8833);transform-origin:0 0;">Git(<u style="text-underline-offset:1px">G</u>)</div>
<div class="t" style="left:839.54px;top:12.67px;font-size:20.00px;color:#c4c4c4;transform:scaleX(0.9236);transform-origin:0 0;"><span class="cj">窗口</span>(<u style="text-underline-offset:1px">W</u>)</div>
<div class="t" style="left:924.51px;top:12.67px;font-size:20.00px;color:#c4c4c4;transform:scaleX(0.9331);transform-origin:0 0;"><span class="cj">帮助</span>(<u style="text-underline-offset:1px">H</u>)</div>
<div class="t" style="left:1031.40px;top:9.97px;font-size:20.00px;color:#8f8f8f;transform:scaleX(0.9845);transform-origin:0 0;">MyApplication - Index.ets [entry]</div>
<div class="t" style="left:19.00px;top:54.57px;font-size:20.00px;color:#c8c8c8;font-weight:bold;transform:scaleX(0.9596);transform-origin:0 0;">MyApplication4</div>
<div class="t" style="left:184.00px;top:54.57px;font-size:20.00px;color:#c8c8c8;font-weight:bold;transform:scaleX(0.9392);transform-origin:0 0;">entry</div>
<div class="t" style="left:252.00px;top:54.57px;font-size:20.00px;color:#bbbbbb;transform:scaleX(0.8519);transform-origin:0 0;">src</div>
<div class="t" style="left:297.00px;top:54.57px;font-size:20.00px;color:#bbbbbb;">main</div>
<div class="t" style="left:362.50px;top:54.57px;font-size:20.00px;color:#bbbbbb;transform:scaleX(0.8926);transform-origin:0 0;">ets</div>
<div class="t" style="left:409.00px;top:54.57px;font-size:20.00px;color:#bbbbbb;transform:scaleX(0.9315);transform-origin:0 0;">pages</div>
<div class="t" style="left:506.40px;top:54.57px;font-size:20.00px;color:#6a9fd4;transform:scaleX(0.9146);transform-origin:0 0;">Index.ets</div>
<div class="t" style="left:1590.60px;top:55.47px;font-size:20.00px;color:#bbbbbb;transform:scaleX(0.9644);transform-origin:0 0;">entry</div>
<div class="t" style="left:1702.00px;top:55.47px;font-size:20.00px;color:#bbbbbb;transform:scaleX(0.9307);transform-origin:0 0;">No Devices</div>
<div class="t" style="left:2096.60px;top:55.47px;font-size:20.00px;color:#bbbbbb;transform:scaleX(0.8671);transform-origin:0 0;">Git(G):</div>
<div class="t" style="left:79.20px;top:97.07px;font-size:20.00px;color:#bbbbbb;transform:scaleX(0.9893);transform-origin:0 0;">EntryAbility.ets</div>
<div class="t" style="left:287.80px;top:97.07px;font-size:20.00px;color:#62a84f;transform:scaleX(0.9055);transform-origin:0 0;">Observe.ets</div>
<div class="t" style="left:464.70px;top:97.07px;font-size:20.00px;color:#6a9fd4;transform:scaleX(0.9110);transform-origin:0 0;">Index.ets</div>
<div class="t" style="left:50.50px;top:134.67px;font-size:20.00px;color:#bbbbbb;transform:scaleX(0.9490);transform-origin:0 0;">Index</div>
<div class="t" style="left:1663.84px;top:99.41px;font-size:19.00px;color:#bbbbbb;transform:scaleX(1.0494);transform-origin:0 0;"><span class="cj">预览器</span></div>
<div class="t" style="left:1681.00px;top:139.75px;font-size:22.50px;color:#e8e8e8;transform:scaleX(0.9409);transform-origin:0 0;">entry : /pages/Index</div>
<div class="t" style="left:1992.00px;top:226.00px;font-size:21.50px;color:#f0f0f0;">Phone (medium)</div>
<div class="t" style="left:72.00px;top:1554.34px;font-size:17.20px;color:#bbbbbb;transform:scaleX(0.9801);transform-origin:0 0;">Git</div>
<div class="t" style="left:158.40px;top:1554.34px;font-size:17.20px;color:#bbbbbb;transform:scaleX(1.0105);transform-origin:0 0;">Migrate Assistant</div>
<div class="t" style="left:354.70px;top:1554.34px;font-size:17.20px;color:#bbbbbb;transform:scaleX(0.9938);transform-origin:0 0;">Profiler</div>
<div class="t" style="left:459.54px;top:1554.34px;font-size:17.20px;color:#bbbbbb;transform:scaleX(1.0743);transform-origin:0 0;"><span class="cj">构建</span></div>
<div class="t" style="left:548.00px;top:1554.34px;font-size:17.20px;color:#bbbbbb;transform:scaleX(0.9680);transform-origin:0 0;">TODO</div>
<div class="t" style="left:645.60px;top:1554.34px;font-size:17.20px;color:#bbbbbb;transform:scaleX(1.0471);transform-origin:0 0;"><span class="cj">日志</span></div>
<div class="t" style="left:729.15px;top:1554.34px;font-size:17.20px;color:#bbbbbb;transform:scaleX(1.0675);transform-origin:0 0;"><span class="cj">问题</span></div>
<div class="t" style="left:812.09px;top:1554.34px;font-size:17.20px;color:#bbbbbb;transform:scaleX(1.0947);transform-origin:0 0;"><span class="cj">终端</span></div>
<div class="t" style="left:896.18px;top:1554.34px;font-size:17.20px;color:#bbbbbb;transform:scaleX(1.0981);transform-origin:0 0;"><span class="cj">服务</span></div>
<div class="t" style="left:986.00px;top:1554.34px;font-size:17.20px;color:#bbbbbb;transform:scaleX(1.0205);transform-origin:0 0;">Code Linter</div>
<div class="t" style="left:1137.00px;top:1554.34px;font-size:17.20px;color:#bbbbbb;transform:scaleX(1.0040);transform-origin:0 0;">ArkUI Inspector</div>
<div class="t" style="left:1311.73px;top:1554.34px;font-size:17.20px;color:#bbbbbb;transform:scaleX(0.9911);transform-origin:0 0;"><span class="cj">预览器日志</span></div>
<div class="a" style="left:0;top:1578px;width:1893px;height:30px;overflow:hidden"><div class="t" style="left:59.60px;top:6.99px;font-size:19.50px;color:#bbbbbb;transform:scaleX(0.9660);transform-origin:0 0;">Microsoft Defender configuration: The IDE has detected Microsoft Defender with Real-Time Protection enabled. It might severely degrade IDE performance. It is recommended to add the following... (40 minutes ago</div></div>
<div class="t" style="left:1978.00px;top:1584.99px;font-size:19.50px;color:#bbbbbb;transform:scaleX(0.9134);transform-origin:0 0;">14:7</div>
<div class="t" style="left:2033.00px;top:1584.99px;font-size:19.50px;color:#bbbbbb;transform:scaleX(0.7832);transform-origin:0 0;">LF</div>
<div class="t" style="left:2070.00px;top:1584.99px;font-size:19.50px;color:#bbbbbb;transform:scaleX(0.9290);transform-origin:0 0;">UTF-8</div>
<div class="t" style="left:2142.00px;top:1584.99px;font-size:19.50px;color:#bbbbbb;transform:scaleX(0.9000);transform-origin:0 0;">2 spaces</div>
<div class="t" style="left:2256.03px;top:1584.99px;font-size:19.50px;color:#bbbbbb;transform:scaleX(0.9519);transform-origin:0 0;"><span class="cj">状态管理</span></div>
<div class="a" style="left:2373px;top:1579px;width:49px;height:29px;background:#5b5c5d"></div>
<div class="a" style="left:2373px;top:1579px;width:19.3px;height:29px;background:#6a6b6c"></div>
<div class="t" style="left:2384.70px;top:1584.99px;font-size:19.50px;color:#bbbbbb;transform:scaleX(0.9605);transform-origin:0 0;">191,<span class="cj">共</span>1300M</div>
<div class="t" style="left:10.85px;top:266.19px;font-size:17.00px;color:#bbbbbb;transform:rotate(-90deg) scaleX(0.9670);transform-origin:0 0;"><span class="cj">鸿蒙生态伙伴</span>SDK<span class="cj">市场</span></div>
<div class="t" style="left:10.85px;top:362.23px;font-size:17.00px;color:#bbbbbb;transform:rotate(-90deg) scaleX(0.9841);transform-origin:0 0;"><span class="cj">项目</span></div>
<div class="t" style="left:10.85px;top:446.17px;font-size:17.00px;color:#bbbbbb;transform:rotate(-90deg) scaleX(1.0893);transform-origin:0 0;"><span class="cj">提交</span></div>
<div class="t" style="left:10.85px;top:1416.00px;font-size:17.00px;color:#bbbbbb;transform:rotate(-90deg) scaleX(1.0118);transform-origin:0 0;">Bookmarks</div>
<div class="t" style="left:10.85px;top:1507.46px;font-size:17.00px;color:#bbbbbb;transform:rotate(-90deg) scaleX(1.0859);transform-origin:0 0;"><span class="cj">结构</span></div>
<div class="t" style="left:2509.65px;top:128.00px;font-size:17.00px;color:#bbbbbb;transform:rotate(90deg) scaleX(0.9783);transform-origin:0 0;">Kit Assistant</div>
<div class="t" style="left:2509.65px;top:280.00px;font-size:17.00px;color:#bbbbbb;transform:rotate(90deg) scaleX(1.0430);transform-origin:0 0;">Notifications</div>
<div class="t" style="left:2509.65px;top:431.29px;font-size:17.00px;color:#dddddd;transform:rotate(90deg) scaleX(1.0201);transform-origin:0 0;"><span class="cj">预览器</span></div>
<div class="t" style="left:2509.65px;top:1378.00px;font-size:17.00px;color:#bbbbbb;transform:rotate(90deg) scaleX(0.9667);transform-origin:0 0;">Device File Browser</div>
<div class="t" style="left:1836.60px;top:369.27px;font-size:22.00px;color:#ffffff;transform:scaleX(1.0946);transform-origin:0 0;">person<span class="cj">的</span>age100</div>
<div class="t" style="left:1837.40px;top:439.17px;font-size:22.00px;color:#ffffff;transform:scaleX(1.1130);transform-origin:0 0;">son<span class="cj">的</span>weight300</div>
</body></html>
